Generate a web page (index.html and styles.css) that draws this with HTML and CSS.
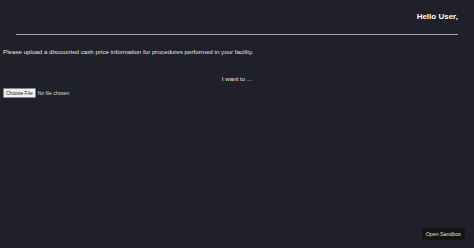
FILE: index.html
```html
<!DOCTYPE html>
<html>
<head>
<meta charset="utf-8">
<link rel="stylesheet" href="styles.css">
</head>
<body>
<div class="page">
  <header class="top">
    <div class="greet">Hello User,</div>
    <hr class="rule">
  </header>
  <p class="intro">Please upload a discounted cash price information for procedures performed in your facility.</p>
  <p class="want">I want to ...</p>
  <div class="upload"><input type="file" class="file"></div>
</div>
<button class="sandbox">Open Sandbox</button>
</body>
</html>
```
FILE: styles.css
```css
html, body {
  margin: 0;
  padding: 0;
  height: 100%;
}
body {
  background: #1f2029;
  color: #e6e6e6;
  font-family: "Liberation Sans", Arial, sans-serif;
  font-size: 6px;
  position: relative;
  overflow: hidden;
}
.page {
  display: flex;
  flex-direction: column;
}
.top {
  padding: 12px 16px 0 16px;
}
.greet {
  text-align: right;
  font-weight: bold;
  font-size: 8px;
  color: #fff;
  line-height: 10px;
}
.rule {
  margin: 12px 0 0 0;
  border: 0;
  height: 1px;
  background: #a9aab0;
}
.intro {
  margin: 13px 0 0 3px;
  font-size: 6.2px;
  line-height: 8px;
}
.want {
  margin: 19px 0 0 0;
  text-align: center;
  font-size: 6.2px;
  line-height: 8px;
}
.upload {
  margin: 5px 0 0 3px;
}
.file {
  font-size: 5px;
  color: #ddd;
  font-family: "Liberation Sans", Arial, sans-serif;
}
.file::file-selector-button {
  font-size: 5px;
  padding: 1px 2px;
  margin-right: 2px;
  background: #f0f0f0;
  color: #222;
  border: 1px solid #888;
  border-radius: 1px;
}
.sandbox {
  position: absolute;
  right: 9px;
  bottom: 8px;
  background: #141414;
  color: #e0e0e0;
  border: 0;
  border-radius: 2px;
  font-family: "Liberation Sans", Arial, sans-serif;
  font-size: 5.3px;
  padding: 3px 4px;
}
```
